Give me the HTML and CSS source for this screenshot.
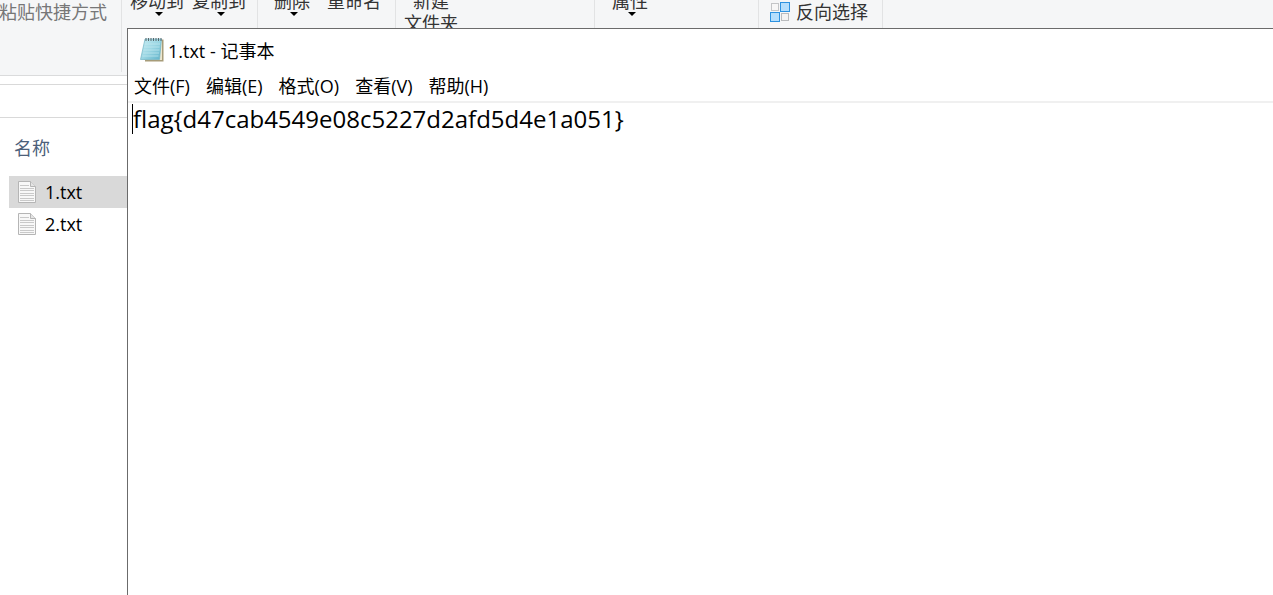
FILE: index.html
```
<!DOCTYPE html>
<html lang="zh-CN">
<head>
    <meta charset="UTF-8">
    <meta name="viewport" content="width=device-width, initial-scale=1.0">
    <title>1.txt - 记事本</title>
    <link rel="stylesheet" href="styles.css">
</head>
<body>
    <div class="explorer">
        <div class="ribbon">
            <div class="group group-paste">
                <button type="button" class="small-btn" disabled>粘贴快捷方式</button>
            </div>
            <div class="group group-move">
                <button type="button" class="big-btn">移动到<span class="arrow"></span></button>
                <button type="button" class="big-btn">复制到<span class="arrow"></span></button>
            </div>
            <div class="group group-delete">
                <button type="button" class="big-btn">删除<span class="arrow"></span></button>
                <button type="button" class="big-btn">重命名</button>
            </div>
            <div class="group group-new">
                <button type="button" class="big-btn">新建<br>文件夹</button>
            </div>
            <div class="group group-props">
                <button type="button" class="big-btn">属性<span class="arrow"></span></button>
            </div>
            <div class="group group-select">
                <button type="button" class="small-btn">
                    <svg width="21" height="21" viewBox="0 0 21 21">
                        <rect x="2.5" y="1.500" width="7" height="7" fill="#f7f7f7" stroke="#c3c5c7"/>
                        <rect x="12.5" y="11.500" width="7" height="7" fill="#f3f3f3" stroke="#b9bbbd"/>
                        <rect x="11.5" y=".5" width="9" height="9" fill="#b5defc" stroke="#2d92e0"/>
                        <rect x="1.5" y="10.500" width="9" height="9" fill="#b5defc" stroke="#2d92e0"/>
                    </svg>
                    反向选择
                </button>
            </div>
        </div>
        <div class="address"></div>
        <table class="files">
            <thead>
                <tr><th>名称</th></tr>
            </thead>
            <tbody>
                <tr class="selected">
                    <td>
                        <div class="file">
                            <svg width="18" height="22" viewBox="0 0 18 22">
                                <path d="M.5.5h12l5 5v16H.5z" fill="#f8f8f8" stroke="#b5b5b5"/>
                                <path d="M12.5.5v5h5" fill="#e4e4e4" stroke="#b5b5b5"/>
                                <path d="M2 4.5h9M2 7.5h14M2 9.5h14M2 12.5h14M2 14.5h14M2 17.5h14M2 19.5h14" stroke="#c9c9c9"/>
                            </svg>
                            <span>1.txt</span>
                        </div>
                    </td>
                </tr>
                <tr>
                    <td>
                        <div class="file">
                            <svg width="18" height="22" viewBox="0 0 18 22">
                                <path d="M.5.5h12l5 5v16H.5z" fill="#f8f8f8" stroke="#b5b5b5"/>
                                <path d="M12.5.5v5h5" fill="#e4e4e4" stroke="#b5b5b5"/>
                                <path d="M2 4.5h9M2 7.5h14M2 9.5h14M2 12.5h14M2 14.5h14M2 17.5h14M2 19.5h14" stroke="#c9c9c9"/>
                            </svg>
                            <span>2.txt</span>
                        </div>
                    </td>
                </tr>
            </tbody>
        </table>
    </div>

    <div class="notepad">
        <div class="title">
            <svg width="24" height="25" viewBox="0 0 24 25">
                <defs>
                    <linearGradient id="pad" x1="0" y1="0" x2="1" y2="1">
                        <stop offset="0" stop-color="#c9edf3"/>
                        <stop offset=".5" stop-color="#9bd6e3"/>
                        <stop offset="1" stop-color="#5fb2c9"/>
                    </linearGradient>
                </defs>
                <path d="M6 3L23.500 2.500V24.500H5V22z" fill="#a79c79"/>
                <path d="M6 3L22 2.500V23H4z" fill="#ece6cf"/>
                <path d="M5 2H21.500L19.500 22.500H.5z" fill="url(#pad)" stroke="#70b3c4" stroke-width=".7"/>
                <path d="M4.500 7H20M4 10H19.500M3.500 13H19.500M3 16H19M2.500 19H18.500" stroke="#c4eaf1" stroke-width=".7"/>
                <path d="M6 1v3M8.500 1v3M11 1v3M13.500 1v3M16 1v3M18.500 1v3M21 1v3" stroke="#59676b"/>
            </svg>
            <span>1.txt - 记事本</span>
        </div>
        <div class="menu">
            <button type="button">文件(F)</button>
            <button type="button">编辑(E)</button>
            <button type="button">格式(O)</button>
            <button type="button">查看(V)</button>
            <button type="button">帮助(H)</button>
        </div>
        <div class="editor">
            <textarea aria-label="文本编辑器" spellcheck="false">flag{d47cab4549e08c5227d2afd5d4e1a051}</textarea>
        </div>
    </div>
</body>
</html>
```
FILE: styles.css
```
*{
    box-sizing: border-box;
    margin: 0;
    padding: 0;
}
body{
    height: 100vh;
    overflow: hidden;
    background-color: white;
    color: black;
    font-family: "Open Sans", "Noto Sans CJK SC", sans-serif;
    font-size: 18px;
}
button{
    border: none;
    background: none;
    color: inherit;
    font: inherit;
    white-space: nowrap;
}
svg{
    flex: none;
}

/* explorer window behind */
.explorer{
    height: 100%;
    overflow: hidden;
}
.ribbon{
    display: flex;
    height: 86px;
    margin-top: -10px;
    padding-bottom: 3px;
    background-color: #f5f6f7;
    border-bottom: 1px solid #dadbdc;
    color: #333;
    line-height: 22px;
}
.group{
    display: flex;
    flex: none;
    align-items: flex-start;
    gap: 8px;
    border-right: 1px solid #e2e3e4;
}
.group-paste{
    width: 122px;
    justify-content: flex-end;
    padding-right: 14px;
}
.group-move{
    width: 136px;
    padding-left: 8px;
}
.group-delete{
    width: 138px;
    gap: 17px;
    padding-left: 16px;
}
.group-new{
    width: 199px;
    padding-left: 8px;
}
.group-props{
    width: 164px;
    padding-left: 17px;
}
.group-select{
    width: 124px;
    padding-left: 10px;
}
.big-btn{
    display: flex;
    flex-direction: column;
    align-items: center;
}
.group-new .big-btn{
    display: block;
}
.small-btn{
    display: flex;
    align-items: center;
    gap: 6px;
    padding-top: 11px;
}
.small-btn:disabled{
    color: #777;
}
.arrow{
    margin-left: 4px;
    border: 4px solid transparent;
    border-top-color: black;
    border-bottom: none;
}
.address{
    height: 34px;
    margin-top: 8px;
    border: 1px solid #d9d9d9;
    border-width: 1px 0;
}
.files{
    width: calc(100% - 9px);
    margin-left: 9px;
    border-collapse: collapse;
}
.files th{
    height: 58px;
    padding-left: 5px;
    color: #4c607a;
    font-weight: normal;
    text-align: left;
}
.files td{
    height: 32px;
    padding-bottom: 1px;
}
.selected{
    background-color: #d9d9d9;
}
.file{
    display: flex;
    align-items: center;
    gap: 9px;
    padding-left: 9px;
    line-height: 30px;
}

/* notepad window on top */
.notepad{
    position: absolute;
    top: 28px;
    right: 0;
    bottom: 0;
    left: 127px;
    display: flex;
    flex-direction: column;
    background-color: white;
    border: 1px solid #6b6b6b;
    border-width: 1px 0 0 1px;
}
.title{
    display: flex;
    align-items: center;
    gap: 4px;
    height: 41px;
    padding-left: 12px;
}
.menu{
    display: flex;
    gap: 16px;
    height: 33px;
    padding-left: 6px;
    padding-bottom: 1px;
    border-bottom: 2px solid #f0f0f0;
}
.editor{
    position: relative;
    flex: 1;
}
.editor::before{
    content: "";
    position: absolute;
    top: 1px;
    left: 4px;
    width: 1px;
    height: 30px;
    background-color: black;
}
.editor textarea{
    display: block;
    width: 100%;
    height: 100%;
    padding-left: 5px;
    border: none;
    outline: none;
    resize: none;
    background: none;
    font: inherit;
    font-size: 24px;
    line-height: 32px;
}
```
